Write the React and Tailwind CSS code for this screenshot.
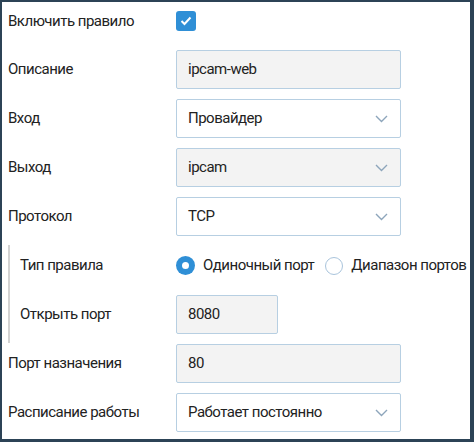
import React from 'react';

const Chevron = () => (
  <svg width="13" height="8" viewBox="0 0 13 8" className="shrink-0">
    <polyline points="1,1 6.5,6.5 12,1" fill="none" stroke="#8da5bb" strokeWidth="1.4" />
  </svg>
);

const Field = ({ value, gray, select, w = 'w-[225px]' }) => (
  <div
    className={`${w} h-[39px] flex items-center justify-between pl-[11px] pr-[12px] border border-[#b7cfe2] rounded-[2px] ${gray ? 'bg-[#f3f3f3]' : 'bg-white'}`}
  >
    <span className="whitespace-nowrap">{value}</span>
    {select && <Chevron />}
  </div>
);

const Row = ({ label, children, lw = 'w-[168px]' }) => (
  <div className="flex items-center h-[39px]">
    <div className={`${lw} shrink-0 whitespace-nowrap`}>{label}</div>
    {children}
  </div>
);

const Radio = ({ checked, label }) => (
  <div className="flex items-center shrink-0">
    {checked ? (
      <span className="w-[19px] h-[19px] rounded-full bg-[#2f8fd6] flex items-center justify-center">
        <span className="w-[7px] h-[7px] rounded-full bg-white" />
      </span>
    ) : (
      <span className="w-[18px] h-[18px] rounded-full border-[1.5px] border-[#a9c4dc] bg-white" />
    )}
    <span className="ml-[8px] whitespace-nowrap">{label}</span>
  </div>
);

export default function App() {
  return (
    <div
      className="w-[474px] h-[442px] overflow-hidden bg-white border-l-2 border-t-2 border-r-4 border-b-[3px] border-[#2c4356] pl-[6px] text-[15px] tracking-[-0.5px] text-[#222]"
      style={{ fontFamily: 'Roboto, "Liberation Sans", sans-serif' }}
    >
      <div className="flex flex-col gap-[10px]">
        <div className="flex items-center h-[38px]">
          <div className="w-[168px] shrink-0">Включить правило</div>
          <span className="w-[20px] h-[20px] rounded-[3px] bg-[#2f8fd6] flex items-center justify-center">
            <svg width="12" height="10" viewBox="0 0 12 10">
              <polyline points="1.5,5 4.5,8 10.5,1.5" fill="none" stroke="white" strokeWidth="2" />
            </svg>
          </span>
        </div>
        <Row label="Описание"><Field value="ipcam-web" gray /></Row>
        <Row label="Вход"><Field value="Провайдер" select /></Row>
        <Row label="Выход"><Field value="ipcam" gray select /></Row>
        <Row label="Протокол"><Field value="TCP" select /></Row>
        <div className="flex flex-col gap-[10px] border-l-2 border-[#d3d3d3] pl-[10px] mt-[-1px] pt-px pb-[9px] mb-[-9px]">
          <Row label="Тип правила" lw="w-[156px]">
            <div className="flex items-center gap-[11px]">
              <Radio checked label="Одиночный порт" />
              <Radio label="Диапазон портов" />
            </div>
          </Row>
          <Row label="Открыть порт" lw="w-[156px]"><Field value="8080" gray w="w-[102px]" /></Row>
        </div>
        <Row label="Порт назначения"><Field value="80" gray /></Row>
        <Row label="Расписание работы"><Field value="Работает постоянно" select /></Row>
      </div>
    </div>
  );
}
